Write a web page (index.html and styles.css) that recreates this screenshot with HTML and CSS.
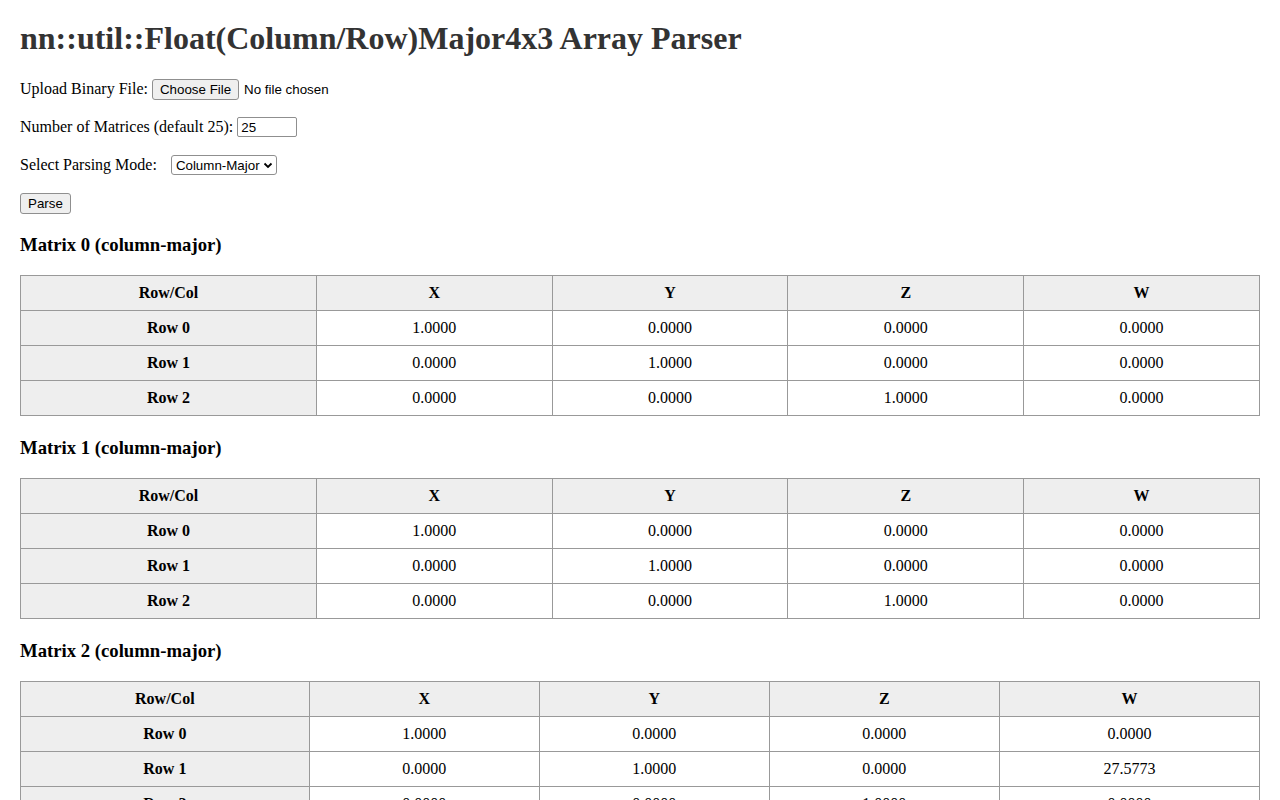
FILE: index.html
```html
<!DOCTYPE html>
<html lang="en">
<head>
  <meta charset="UTF-8" />
  <meta name="viewport" content="width=device-width, initial-scale=1.0" />
  <title>Float Major4x3 Array Parser</title>
  <link rel="stylesheet" href="styles.css">
</head>
<body>
  <h1>nn::util::Float(Column/Row)Major4x3 Array Parser</h1>

  <div class="field">
    <label for="file">Upload Binary File:</label>
    <span class="file-input">
      <button type="button" class="btn" onclick="document.getElementById('file').click()">Choose File</button>
      <span id="file-name">No file chosen</span>
      <input type="file" id="file" class="hidden" />
    </span>
  </div>

  <div class="field">
    <label for="count">Number of Matrices (default 25):</label>
    <input type="number" id="count" class="count" value="25" />
  </div>

  <div class="field">
    <label for="mode">Select Parsing Mode:</label>
    <select id="mode" class="mode">
      <option value="column">Column-Major</option>
      <option value="row">Row-Major</option>
    </select>
  </div>

  <div class="field">
    <button type="button" class="btn" id="parse">Parse</button>
  </div>

  <div id="output"></div>

  <script>
    // last parsed buffer: 25 matrices of 4x3 floats
    const matrices = [];
    for (let i = 0; i < 25; i++) {
      matrices.push([
        [1, 0, 0, 0],
        [0, 1, 0, i === 2 ? 27.5773 : 0],
        [0, 0, 1, 0]
      ]);
    }

    document.getElementById("file").addEventListener("change", (e) => {
      const f = e.target.files[0];
      document.getElementById("file-name").textContent = f ? f.name : "No file chosen";
    });

    function render() {
      const mode = document.getElementById("mode").value;
      const label = mode === "column" ? "column-major" : "row-major";
      const count = parseInt(document.getElementById("count").value) || 25;
      const out = document.getElementById("output");
      out.innerHTML = "";

      matrices.slice(0, count).forEach((m, idx) => {
        const h = document.createElement("h3");
        h.textContent = "Matrix " + idx + " (" + label + ")";
        out.appendChild(h);

        let html = "<tr><th>Row/Col</th><th>X</th><th>Y</th><th>Z</th><th>W</th></tr>";
        m.forEach((row, r) => {
          html += "<tr><th>Row " + r + "</th>";
          row.forEach(v => { html += "<td>" + v.toFixed(4) + "</td>"; });
          html += "</tr>";
        });

        const table = document.createElement("table");
        table.innerHTML = html;
        out.appendChild(table);
      });
    }

    document.getElementById("parse").addEventListener("click", render);
    render();
  </script>
</body>
</html>
```

FILE: styles.css
```css
body {
  margin: 0;
  padding: 20px;
  font-family: "Liberation Serif", "Times New Roman", serif;
  font-size: 16px;
  color: #000;
}

h1 {
  font-size: 32px;
  color: #333;
  margin: 0 0 22px;
}

.field {
  height: 20px;
  margin-bottom: 18px;
}

.hidden {
  display: none;
}

.btn,
.count,
.mode,
#file-name {
  font-family: "Liberation Sans", Arial, sans-serif;
  font-size: 13.33px;
}

#file-name {
  margin-left: 1px;
}

.btn {
  background: #efefef;
  color: #000;
  border: 1px solid #8f8f8f;
  border-radius: 3px;
  padding: 1px 7px;
  height: 21px;
  line-height: 17px;
}

.count {
  box-sizing: border-box;
  width: 60px;
  height: 20px;
  padding: 1px 3px;
  border: 1px solid #8f8f8f;
  border-radius: 2px;
}

.mode {
  appearance: none;
  -webkit-appearance: none;
  box-sizing: border-box;
  margin-left: 10px;
  height: 20px;
  padding: 0 16px 0 4px;
  border: 1px solid #8f8f8f;
  border-radius: 3px;
  background: #fff url("data:image/svg+xml;utf8,<svg xmlns='http://www.w3.org/2000/svg' width='10' height='10' viewBox='0 0 10 10'><path d='M1.5 3.5 L5 7 L8.5 3.5' fill='none' stroke='black' stroke-width='1.8'/></svg>") no-repeat right 3px center;
  color: #000;
}

h3 {
  font-size: 18.72px;
  margin: 21px 0 19px;
}

table {
  width: 100%;
  border-collapse: collapse;
  margin-bottom: 21px;
}

th,
td {
  border: 1px solid #999;
  padding: 8px;
  text-align: center;
}

th {
  background: #eee;
}
```
